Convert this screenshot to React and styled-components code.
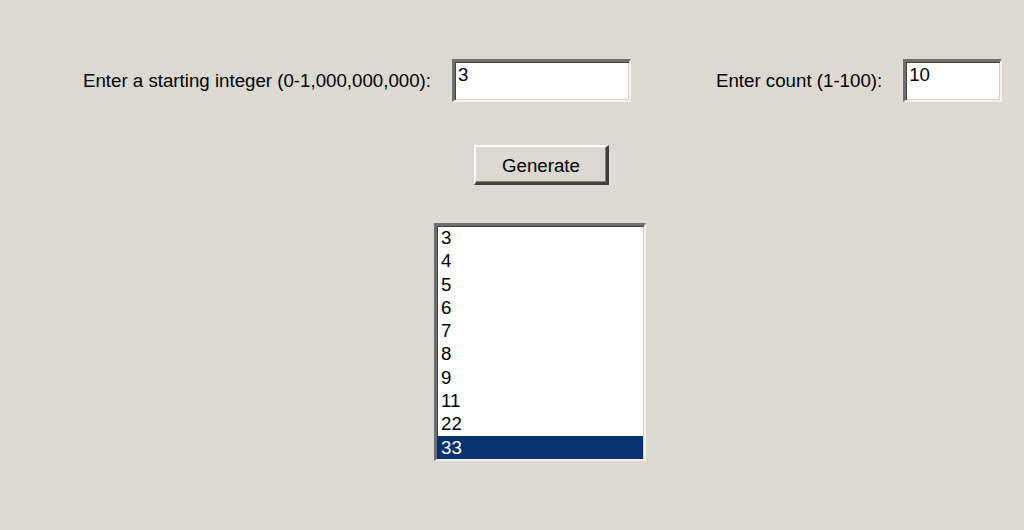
import React from "react";
import styled, { createGlobalStyle } from "styled-components";

const Global = createGlobalStyle`
  html, body { margin: 0; padding: 0; background: #dcd9d3; }
  body { font-family: "Liberation Sans", Arial, sans-serif; }
`;

const Page = styled.div`
  width: 1024px;
  height: 530px;
  background: #dcd9d3;
  box-sizing: border-box;
  padding-top: 59px;
  display: flex;
  flex-direction: column;
  font-size: 18.7px;
  color: #000;
`;

const InputRow = styled.div`
  display: flex;
  align-items: center;
  padding-left: 83px;
  height: 43px;
`;

const Label = styled.span`
  white-space: nowrap;
  margin-right: ${(p) => p.$gap}px;
  line-height: 22px;
`;

const Field = styled.div`
  box-sizing: border-box;
  width: ${(p) => p.$w}px;
  height: 43px;
  background: #fff;
  border-style: solid;
  border-width: 3px 2px 2px 3px;
  border-color: #6f6f6f #f4f3f0 #f4f3f0 #6f6f6f;
  box-shadow: inset 1px 1px 0 #404040, inset -1px -1px 0 #d4d0c8;
  padding: 2px 3px 0;
  line-height: 22px;
  margin-right: ${(p) => p.$gap || 0}px;
`;

const Center = styled.div`
  display: flex;
  flex-direction: column;
  align-items: center;
  padding-left: 59px;
`;

const Button = styled.button`
  margin-top: 43px;
  box-sizing: border-box;
  width: 135px;
  height: 40px;
  font: inherit;
  font-size: 18.7px;
  color: #000;
  background: #dcd9d3;
  border-style: solid;
  border-width: 2px 3px 3px 2px;
  border-color: #ffffff #404040 #404040 #ffffff;
  box-shadow: inset -1px -1px 0 #808080;
  padding: 3px 0 0;
  border-radius: 0;
  cursor: default;
`;

const ListBox = styled.div`
  margin-top: 38px;
  margin-right: 3px;
  box-sizing: border-box;
  width: 212px;
  height: 238px;
  background: #fff;
  border-style: solid;
  border-width: 3px 2px 2px 3px;
  border-color: #6f6f6f #f4f3f0 #f4f3f0 #6f6f6f;
  box-shadow: inset 1px 1px 0 #404040, inset -1px -1px 0 #d4d0c8;
  display: flex;
  flex-direction: column;
`;

const Item = styled.div`
  height: 23.3px;
  line-height: 23.3px;
  padding-left: 4px;
  margin-right: 1px;
  background: ${(p) => (p.$selected ? "#0a3172" : "transparent")};
  color: ${(p) => (p.$selected ? "#fff" : "#000")};
`;

const items = ["3", "4", "5", "6", "7", "8", "9", "11", "22", "33"];

export default function App() {
  return (
    <>
      <Global />
      <Page>
        <InputRow>
          <Label $gap={21}>Enter a starting integer (0-1,000,000,000):</Label>
          <Field $w={179} $gap={85}>3</Field>
          <Label $gap={21}>Enter count (1-100):</Label>
          <Field $w={99}>10</Field>
        </InputRow>
        <Center>
          <Button>Generate</Button>
          <ListBox>
            {items.map((v, i) => (
              <Item key={v} $selected={i === items.length - 1}>
                {v}
              </Item>
            ))}
          </ListBox>
        </Center>
      </Page>
    </>
  );
}
